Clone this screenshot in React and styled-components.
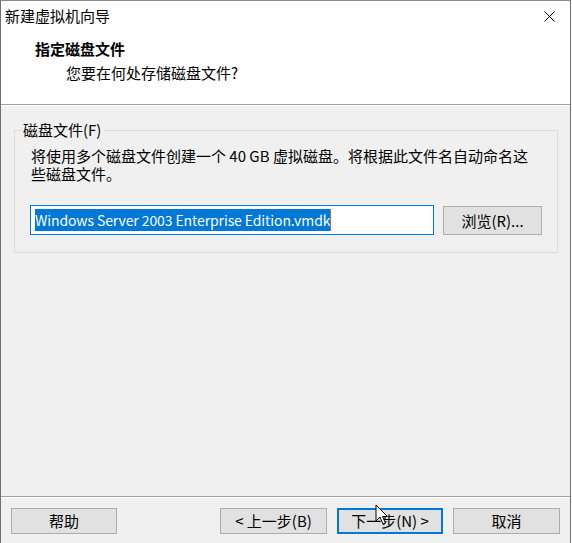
import React from "react";
import styled, { createGlobalStyle } from "styled-components";

const Global = createGlobalStyle`
  html, body { margin: 0; padding: 0; background: #ffffff; }
  body { font-family: "Noto Sans CJK SC", "Noto Sans", sans-serif; font-size: 15px; color: #000; }
  * { box-sizing: border-box; }
`;

const Window = styled.div`
  position: relative;
  width: 571px;
  height: 543px;
  display: flex;
  flex-direction: column;
  border-left: 1px solid #707070;
  border-right: 1px solid #707070;
  border-top: 1px solid #8a8a8a;
  background: #f0f0f0;
  overflow: hidden;
`;

const TitleBar = styled.div`
  height: 30px;
  background: #fff;
  display: flex;
  align-items: center;
  justify-content: space-between;
  padding: 0 15px 0 4px;
  font-size: 15px;
  line-height: 20px;
`;

const CloseIcon = styled.svg`
  width: 11px;
  height: 11px;
  display: block;
`;

const Header = styled.div`
  height: 74px;
  background: #fff;
  border-bottom: 1px solid #a0a0a0;
  box-shadow: 0 1px 0 #ffffff;
  padding: 8px 0 0 34px;
  display: flex;
  flex-direction: column;
  gap: 4px;
`;

const HeaderTitle = styled.div`
  font-weight: bold;
  line-height: 20px;
`;

const HeaderSub = styled.div`
  padding-left: 31px;
  line-height: 20px;
`;

const Body = styled.div`
  flex: 1;
  padding: 16px 13px 0 13px;
`;

const GroupBox = styled.fieldset`
  margin: 0;
  border: 1px solid #dcdcdc;
  padding: 8px 15px 17px 16px;
`;

const Legend = styled.legend`
  margin-left: -10px;
  padding: 0 3px 0 2px;
  line-height: 18px;
`;

const Description = styled.p`
  margin: 0;
  line-height: 18px;
  white-space: nowrap;
`;

const PathRow = styled.div`
  margin-top: 22px;
  display: flex;
  align-items: flex-start;
  gap: 9px;
  margin-left: -1px;
`;

const PathInput = styled.div`
  width: 404px;
  height: 30px;
  background: #fff;
  border: 1px solid #0078d7;
  display: flex;
  align-items: center;
  padding-left: 4px;
`;

const Selected = styled.span`
  background: #0078d7;
  color: #fff;
  line-height: 22px;
  font-size: 14px;
  letter-spacing: -0.1px;
`;

const Caret = styled.span`
  width: 1px;
  height: 22px;
  background: #b96f2a;
`;

const Button = styled.div`
  width: ${(p) => p.$w || 106}px;
  height: ${(p) => p.$h || 26}px;
  background: #e1e1e1;
  border: ${(p) => (p.$default ? "2px solid #0078d7" : "1px solid #adadad")};
  display: flex;
  align-items: center;
  justify-content: center;
  line-height: 20px;
  margin-top: ${(p) => p.$mt || 0}px;
`;

const Footer = styled.div`
  height: 47px;
  border-top: 1px solid #a0a0a0;
  box-shadow: inset 0 1px 0 #ffffff;
  padding: 11px 10px 0 10px;
  display: flex;
  justify-content: space-between;
  align-items: flex-start;
`;

const NavGroup = styled.div`
  display: flex;
  gap: 10px;
`;

const Cursor = styled.svg`
  position: absolute;
  left: 374px;
  top: 503px;
  width: 14px;
  height: 22px;
  pointer-events: none;
`;

export default function App() {
  return (
    <>
      <Global />
      <Window>
        <TitleBar>
          <span>新建虚拟机向导</span>
          <CloseIcon viewBox="0 0 11 11">
            <path d="M0.5 0.5 L10.5 10.5 M10.5 0.5 L0.5 10.5" stroke="#000" strokeWidth="1" fill="none" />
          </CloseIcon>
        </TitleBar>
        <Header>
          <HeaderTitle>指定磁盘文件</HeaderTitle>
          <HeaderSub>您要在何处存储磁盘文件?</HeaderSub>
        </Header>
        <Body>
          <GroupBox>
            <Legend>磁盘文件(F)</Legend>
            <Description>
              将使用多个磁盘文件创建一个 40 GB 虚拟磁盘。将根据此文件名自动命名这
              <br />
              些磁盘文件。
            </Description>
            <PathRow>
              <PathInput>
                <Selected>Windows Server 2003 Enterprise Edition.vmdk</Selected>
                <Caret />
              </PathInput>
              <Button $w={99} $h={29} $mt={1}>浏览(R)...</Button>
            </PathRow>
          </GroupBox>
        </Body>
        <Footer>
          <Button>帮助</Button>
          <NavGroup>
            <Button $w={107}>&lt; 上一步(B)</Button>
            <Button $default>下一步(N) &gt;</Button>
            <Button $w={107}>取消</Button>
          </NavGroup>
        </Footer>
        <Cursor viewBox="0 0 14 22">
          <path d="M1 1 L1 17 L5 13 L8 20 L10.5 19 L7.5 12.5 L12.5 12.5 Z" fill="#fff" stroke="#000" strokeWidth="1" strokeLinejoin="miter" />
        </Cursor>
      </Window>
    </>
  );
}
